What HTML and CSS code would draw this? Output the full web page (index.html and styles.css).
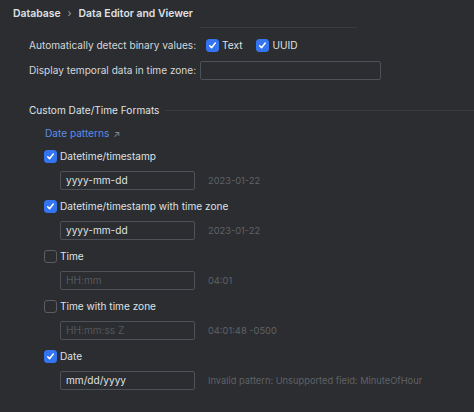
FILE: index.html
```html
<!DOCTYPE html>
<html>
<head>
<meta charset="utf-8">
<link rel="stylesheet" href="styles.css">
</head>
<body>
<div class="page">
  <div class="crumbs"><span>Database</span><span class="sep">›</span><span>Data Editor and Viewer</span></div>
  <div class="topline"></div>

  <div class="row r1">
    <span class="label">Automatically detect binary values:</span>
    <span class="cb on"><svg viewBox="0 0 13 13"><path d="M3.2 6.8 L5.4 9.2 L9.8 3.6" /></svg></span>
    <span class="cbtext">Text</span>
    <span class="cb on gap"><svg viewBox="0 0 13 13"><path d="M3.2 6.8 L5.4 9.2 L9.8 3.6" /></svg></span>
    <span class="cbtext">UUID</span>
  </div>
  <div class="row r2">
    <span class="label">Display temporal data in time zone:</span>
    <span class="field tz"></span>
  </div>

  <div class="row title">
    <span>Custom Date/Time Formats</span>
    <span class="rule"></span>
  </div>
  <div class="row link"><span>Date patterns</span><span class="arrow">↗</span></div>

  <div class="row check"><span class="cb on"><svg viewBox="0 0 13 13"><path d="M3.2 6.8 L5.4 9.2 L9.8 3.6" /></svg></span><span class="cbtext">Datetime/timestamp</span></div>
  <div class="row input"><span class="field">yyyy-mm-dd</span><span class="sample">2023-01-22</span></div>

  <div class="row check"><span class="cb on"><svg viewBox="0 0 13 13"><path d="M3.2 6.8 L5.4 9.2 L9.8 3.6" /></svg></span><span class="cbtext">Datetime/timestamp with time zone</span></div>
  <div class="row input"><span class="field">yyyy-mm-dd</span><span class="sample">2023-01-22</span></div>

  <div class="row check"><span class="cb"></span><span class="cbtext">Time</span></div>
  <div class="row input"><span class="field off">HH:mm</span><span class="sample">04:01</span></div>

  <div class="row check"><span class="cb"></span><span class="cbtext">Time with time zone</span></div>
  <div class="row input"><span class="field off">HH:mm:ss Z</span><span class="sample">04:01:48 -0500</span></div>

  <div class="row check"><span class="cb on"><svg viewBox="0 0 13 13"><path d="M3.2 6.8 L5.4 9.2 L9.8 3.6" /></svg></span><span class="cbtext">Date</span></div>
  <div class="row input"><span class="field">mm/dd/yyyy</span><span class="sample">Invalid pattern: Unsupported field: MinuteOfHour</span></div>
</div>
</body>
</html>
```
FILE: styles.css
```css
html, body {
  margin: 0;
  padding: 0;
  background: #2b2d30;
}
body {
  width: 474px;
  height: 412px;
  overflow: hidden;
  font-family: Inter, "Noto Sans", sans-serif;
  font-size: 10.1px;
  color: #dfe1e5;
}
.page {
  display: flex;
  flex-direction: column;
}
.crumbs {
  height: 27px;
  display: flex;
  align-items: center;
  padding-left: 13px;
  font-weight: 600;
  font-size: 10.4px;
  color: #dfe1e5;
}
.crumbs .sep {
  margin: 0 7px 0 7px;
  font-weight: 400;
  color: #9da0a8;
}
.topline {
  margin-left: 200px;
  width: 157px;
  height: 1px;
  background: #393b40;
}
.row {
  display: flex;
  align-items: center;
  height: 20px;
  white-space: nowrap;
}
.r1 { margin-top: 7px; padding-left: 29px; }
.r2 { margin-top: 5px; padding-left: 29px; }
.label { color: #d5d7db; }
.r1 .label { margin-right: 10px; }
.r2 .label { margin-right: 4px; }
.cb {
  width: 13px;
  height: 13px;
  box-sizing: border-box;
  border-radius: 3px;
  border: 1px solid #5a5d63;
  background: #2b2d30;
  display: inline-flex;
  flex: none;
}
.cb.on {
  background: #3574f0;
  border-color: #3574f0;
}
.cb svg {
  width: 11px;
  height: 11px;
}
.cb path {
  fill: none;
  stroke: #ffffff;
  stroke-width: 1.8;
  stroke-linecap: round;
  stroke-linejoin: round;
}
.cb.gap { margin-left: 14px; }
.cbtext { margin-left: 3px; }
.field {
  box-sizing: border-box;
  height: 19px;
  width: 135px;
  border: 1px solid #4e5157;
  border-radius: 2px;
  background: #2b2d30;
  display: flex;
  align-items: center;
  padding-left: 5px;
  color: #dfe1e5;
  flex: none;
}
.field.tz { width: 181px; }
.field.off { color: #55585e; }
.title {
  margin-top: 20px;
  padding-left: 29px;
}
.title .rule {
  flex: 1;
  height: 1px;
  background: #393b40;
  margin-left: 6px;
}
.link {
  margin-top: 3px;
  padding-left: 45px;
  color: #5b8ee6;
}
.link .arrow {
  font-size: 9px;
  margin-left: 4px;
  color: #8c9099;
}
.check {
  margin-top: 3px;
  padding-left: 44px;
}
.input {
  margin-top: 4px;
  padding-left: 60px;
}
.check + .input + .check { margin-top: 6px; }
.sample {
  margin-left: 13px;
  font-size: 9.3px;
  color: #5f6268;
}
```
